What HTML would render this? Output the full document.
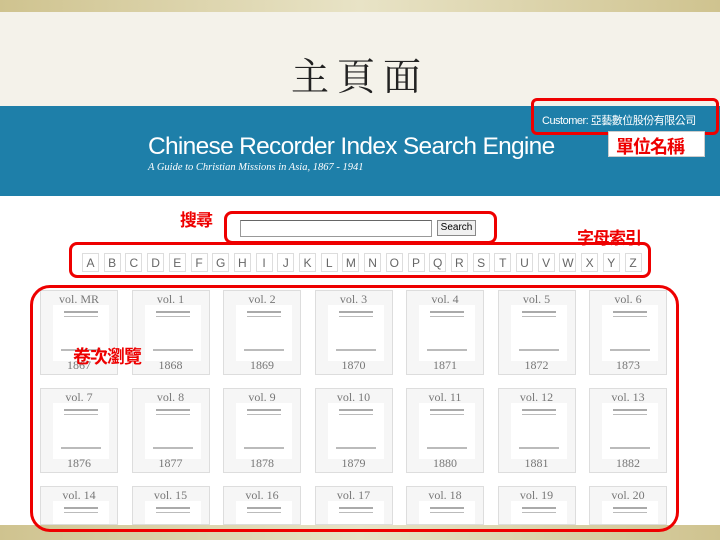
<!DOCTYPE html>
<html><head><meta charset="utf-8"><style>
*{margin:0;padding:0;box-sizing:border-box}
body{width:720px;height:540px;overflow:hidden;position:relative;background:#f4f2ea;font-family:"Liberation Sans","Noto Sans CJK TC",sans-serif}
.topbar{position:absolute;left:0;top:0;width:720px;height:12px;background:linear-gradient(90deg,#cfc38f,#e8e3c6 50%,#cfc38f)}
.botbar{position:absolute;left:0;top:525px;width:720px;height:15px;background:linear-gradient(90deg,#cfc38f,#e8e3c6 50%,#cfc38f)}
.title{position:absolute;left:0;width:720px;top:46px;text-align:center;font-family:"Noto Serif CJK SC",serif;font-size:38px;letter-spacing:8px;color:#222}
.white{position:absolute;left:0;top:106px;width:720px;height:419px;background:#fff}
.blue{position:absolute;left:0;top:106px;width:720px;height:90px;background:#1e7fa9}
.h1{position:absolute;left:148px;top:133px;color:#fff;font-size:24.5px;letter-spacing:-0.7px}
.sub{position:absolute;left:148px;top:162px;color:#fff;font-family:"Liberation Serif",serif;font-style:italic;font-size:10.5px}
.cust{position:absolute;left:542px;top:112px;color:#fff;font-size:11px;letter-spacing:-0.5px}
.red{position:absolute;border:3px solid #e00;border-radius:8px}
.lab{position:absolute;color:#e00;font-weight:bold;font-size:17px;letter-spacing:-1px}
.input{position:absolute;left:240px;top:220px;width:192px;height:17px;border:1px solid #999;border-top-color:#666;background:#fff}
.btn{position:absolute;left:437px;top:220px;width:39px;height:16px;border:1px solid #888;background:#f0f0f0;font-size:10px;text-align:center;line-height:14px}
.let{position:absolute;top:253px;width:17px;height:19px;border:1px solid #ddd;font-size:12px;color:#666;text-align:center;line-height:18px}
.cell{position:absolute;width:78px;height:85px;background:#f6f6f6;border:1px solid #ddd;text-align:center;color:#777;font-size:12px}
.cell .v{position:absolute;top:1px;left:0;width:100%;font-family:"Liberation Serif",serif}
.cell .pg{position:absolute;left:12px;top:14px;width:56px;height:56px;background:#fff}
.pg i{display:block;margin:6px auto 0;width:34px;height:6px;border-top:2px solid #aaa;border-bottom:1px solid #bbb}
.pg b{display:block;margin:32px auto 0;width:40px;height:2px;background:#bbb}
.cell .y{position:absolute;bottom:1px;left:0;width:100%;font-family:"Liberation Serif",serif}
</style></head><body>
<div class="topbar"></div>
<div class="title">主頁面</div>
<div class="white"></div>
<div class="blue"></div>
<div class="botbar"></div>
<div class="h1">Chinese Recorder Index Search Engine</div>
<div class="sub">A Guide to Christian Missions in Asia, 1867 - 1941</div>
<div class="cust">Customer: 亞藝數位股份有限公司</div>
<div class="red" style="left:531px;top:98px;width:188px;height:37px;border-radius:6px"></div>
<div style="position:absolute;left:608px;top:131px;width:97px;height:26px;background:#fff;border:1px solid #ccc"></div>
<div class="lab" style="left:616px;top:133px;font-size:18px">單位名稱</div>
<div class="lab" style="left:180px;top:206px">搜尋</div>
<div class="red" style="left:224px;top:211px;width:273px;height:33px"></div>
<div class="input"></div>
<div class="btn">Search</div>
<div class="lab" style="left:577px;top:224px">字母索引</div>
<div class="red" style="left:69px;top:242px;width:582px;height:36px"></div>
<div id="L"></div>
<div id="C"></div>
<div class="red" style="left:30px;top:285px;width:649px;height:247px;border-radius:20px"></div>
<div class="lab" style="left:73px;top:343px;font-size:18px">卷次瀏覽</div>
<script>
(function(){
var L="ABCDEFGHIJKLMNOPQRSTUVWXYZ",h="";
for(var i=0;i<26;i++)h+='<div class="let" style="left:'+(82+i*21.7)+'px">'+L[i]+'</div>';
document.getElementById("L").outerHTML=h;
var v=["MR","1","2","3","4","5","6","7","8","9","10","11","12","13","14","15","16","17","18","19","20"];
var y=["1867","1868","1869","1870","1871","1872","1873","1876","1877","1878","1879","1880","1881","1882","","","","","","",""];
h="";
for(var k=0;k<21;k++){var r=Math.floor(k/7),c=k%7,tp=290+r*98;
h+='<div class="cell" style="left:'+(40+c*91.5)+'px;top:'+tp+'px;'+(r==2?'height:39px;overflow:hidden':'')+'"><div class="v">vol. '+v[k]+'</div><div class="pg"><i></i><b></b></div><div class="y">'+y[k]+'</div></div>';}
document.getElementById("C").outerHTML=h;
})();
</script>
</body></html>
